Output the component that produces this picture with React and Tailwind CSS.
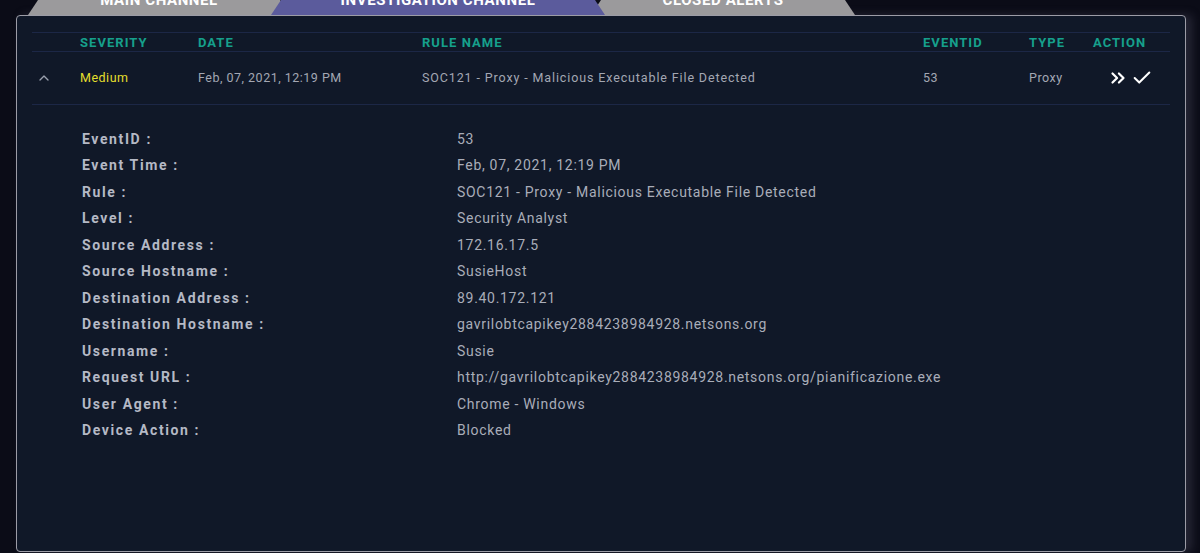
import { ChevronUp, ChevronsRight, Check } from 'lucide-react';

const TABS = [
  { label: 'MAIN CHANNEL', width: 'w-[262px]', offset: 'ml-[28px]', color: 'bg-[#9b9a9c]', z: 'z-0' },
  { label: 'INVESTIGATION CHANNEL', width: 'w-[334px]', offset: '-ml-[19px]', color: 'bg-[#5b5b9c]', z: 'z-20' },
  { label: 'CLOSED ALERTS', width: 'w-[264px]', offset: '-ml-[14px]', color: 'bg-[#9b9a9c]', z: 'z-10' },
];

const DETAILS = [
  ['EventID', '53'],
  ['Event Time', 'Feb, 07, 2021, 12:19 PM'],
  ['Rule', 'SOC121 - Proxy - Malicious Executable File Detected'],
  ['Level', 'Security Analyst'],
  ['Source Address', '172.16.17.5'],
  ['Source Hostname', 'SusieHost'],
  ['Destination Address', '89.40.172.121'],
  ['Destination Hostname', 'gavrilobtcapikey2884238984928.netsons.org'],
  ['Username', 'Susie'],
  ['Request URL', 'http://gavrilobtcapikey2884238984928.netsons.org/pianificazione.exe'],
  ['User Agent', 'Chrome - Windows'],
  ['Device Action', 'Blocked'],
];

const GRID = 'grid grid-cols-[48px_118px_224px_501px_106px_64px_1fr] items-center';

export default function App() {
  return (
    <div className="h-[553px] w-[1200px] overflow-hidden bg-[#0b0c17] font-['Roboto','Liberation_Sans',sans-serif]">
      {/* Channel tabs */}
      <div className="-mt-[6px] flex h-[21px]">
        {TABS.map((tab) => (
          <div
            key={tab.label}
            className={`relative ${tab.z} ${tab.width} ${tab.offset} ${tab.color} flex h-[21px] justify-center [clip-path:polygon(14px_0,calc(100%-14px)_0,100%_100%,0_100%)]`}
          >
            <span className="text-[15px] font-bold leading-[13px] tracking-[0.04em] text-white">{tab.label}</span>
          </div>
        ))}
      </div>

      {/* Panel */}
      <div className="ml-[16px] h-[537px] w-[1170px] rounded-[4px] border border-[#9c9ca6] bg-[#101828] px-[15px] pt-[16px] shadow-[6px_0_10px_rgba(70,70,90,0.45)]">
        <div className={`${GRID} h-[20px] border-y border-[#1c2746] text-[13px] font-bold tracking-[0.08em] text-[#16a08c]`}>
          <span />
          <span>SEVERITY</span>
          <span>DATE</span>
          <span>RULE NAME</span>
          <span>EVENTID</span>
          <span>TYPE</span>
          <span>ACTION</span>
        </div>

        <div className={`${GRID} h-[53px] border-b border-[#1c2746] text-[12.5px] tracking-[0.04em] text-[#a3a7b3]`}>
          <span className="pl-[4px] text-[#9aa0ad]">
            <ChevronUp size={16} strokeWidth={2} />
          </span>
          <span className="text-[#e4df2c]">Medium</span>
          <span>Feb, 07, 2021, 12:19 PM</span>
          <span className="whitespace-nowrap tracking-[0.07em]">SOC121 - Proxy - Malicious Executable File Detected</span>
          <span>53</span>
          <span>Proxy</span>
          <span className="flex items-center gap-[2px] pl-[14px] text-white">
            <ChevronsRight size={22} strokeWidth={2.4} />
            <Check size={22} strokeWidth={2.2} />
          </span>
        </div>

        <div className="pt-[21px]">
          {DETAILS.map(([label, value]) => (
            <div key={label} className="grid h-[26.5px] grid-cols-[375px_1fr] items-center pl-[50px] text-[14px]">
              <span className="font-bold tracking-[0.115em] text-[#b5b9c5]">{label} :</span>
              <span className="tracking-[0.05em] text-[#a9adb9]">{value}</span>
            </div>
          ))}
        </div>
      </div>
    </div>
  );
}
